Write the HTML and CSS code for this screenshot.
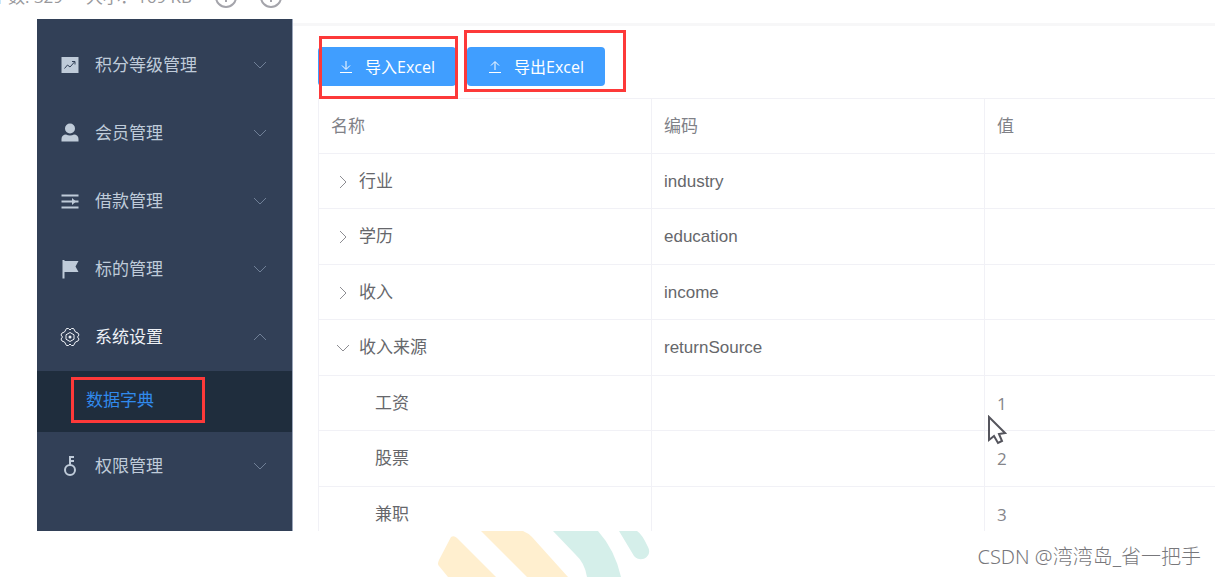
FILE: index.html
```html
<!DOCTYPE html>
<html lang="zh-CN">
<head>
<meta charset="utf-8">
<meta name="viewport" content="width=device-width, initial-scale=1">
<title>数据字典</title>
<link rel="stylesheet" href="styles.css">
</head>
<body>
<div class="page">
  <div class="info-strip">
    <div class="info-row">
      <span>个数: 329</span>
      <span>大小：169 KB</span>
      <svg class="info-icon" viewBox="0 0 22 22"><circle cx="11" cy="11" r="10"/><path d="M11 6v10M7 10l4-4 4 4"/></svg>
      <svg class="info-icon" viewBox="0 0 22 22"><circle cx="11" cy="11" r="10"/><path d="M11 6v10M7 10l4-4 4 4"/></svg>
    </div>
  </div>

  <div class="app">
    <nav class="sidebar">
      <a class="menu-item" href="#">
        <svg class="menu-icon" viewBox="0 0 20 20"><path class="solid" d="M1.500 2h17v16h-17z"/><path class="cut" d="M4.500 13.500l3-3.500 2.500 2 4.500-5M12 6.500h3v3"/></svg>
        <span class="menu-label">积分等级管理</span>
        <svg class="arrow" viewBox="0 0 14 14"><path d="M1 4l6 6 6-6"/></svg>
      </a>
      <a class="menu-item" href="#">
        <svg class="menu-icon" viewBox="0 0 20 20"><circle class="solid" cx="10" cy="5.500" r="5"/><path class="solid" d="M1.500 18.500v-2.500c0-3 2-4.500 4.500-4.500 2.500 1.200 5.500 1.200 8 0 2.500 0 4.500 1.500 4.500 4.500v2.500z"/></svg>
        <span class="menu-label">会员管理</span>
        <svg class="arrow" viewBox="0 0 14 14"><path d="M1 4l6 6 6-6"/></svg>
      </a>
      <a class="menu-item" href="#">
        <svg class="menu-icon" viewBox="0 0 20 20"><path class="line" d="M1.500 4.500h17M1.500 10.500h17M1.500 16.500h17"/><path class="solid" d="M12 7l4 3.500-4 3.500z"/></svg>
        <span class="menu-label">借款管理</span>
        <svg class="arrow" viewBox="0 0 14 14"><path d="M1 4l6 6 6-6"/></svg>
      </a>
      <a class="menu-item" href="#">
        <svg class="menu-icon" viewBox="0 0 20 20"><path class="solid" d="M2.500 1h2v1h14l-3 5.500 3 5.500h-14v6.500h-2z"/></svg>
        <span class="menu-label">标的管理</span>
        <svg class="arrow" viewBox="0 0 14 14"><path d="M1 4l6 6 6-6"/></svg>
      </a>
      <a class="menu-item open" href="#">
        <svg class="menu-icon" viewBox="0 0 20 20"><path class="line" d="M6.500 1.500h2l1.500 1.500 1.500-1.500h2l2 3.500 2.500 1 1 2-1.500 2 1.500 2-1 2-2.500 1-2 3.500h-2l-1.500-1.500-1.500 1.500h-2l-2-3.500-2.500-1-1-2 1.500-2-1.500-2 1-2 2.500-1z"/><path class="line" d="M10 5.500l4 2.300v4.400l-4 2.300-4-2.300v-4.400z"/><circle class="solid" cx="10" cy="10" r="1.500"/></svg>
        <span class="menu-label">系统设置</span>
        <svg class="arrow" viewBox="0 0 14 14"><path d="M1 10l6-6 6 6"/></svg>
      </a>
      <a class="submenu-item" href="#">数据字典<span class="mark mark-menu"></span></a>
      <a class="menu-item" href="#">
        <svg class="menu-icon" viewBox="0 0 20 20"><circle class="line" cx="10" cy="14" r="5"/><path class="line" d="M10 9v-8h4M10 5h4"/></svg>
        <span class="menu-label">权限管理</span>
        <svg class="arrow" viewBox="0 0 14 14"><path d="M1 4l6 6 6-6"/></svg>
      </a>
    </nav>

    <main class="content">
      <div class="toolbar">
        <div class="action">
          <button class="btn" type="button"><svg class="btn-icon" viewBox="0 0 14 14"><path d="M7 1v8M3 5.500l4 4 4-4M1 12.500h12"/></svg>导入Excel</button>
          <span class="mark mark-import"></span>
        </div>
        <div class="action">
          <button class="btn" type="button"><svg class="btn-icon" viewBox="0 0 14 14"><path d="M7 10v-8M3 5.500l4-4 4 4M1 12.500h12"/></svg>导出Excel</button>
          <span class="mark mark-export"></span>
        </div>
      </div>
      <table class="dict">
        <thead>
          <tr><th class="col-name">名称</th><th class="col-code">编码</th><th>值</th></tr>
        </thead>
        <tbody>
          <tr><td><span class="node"><svg class="expand" viewBox="0 0 14 14"><path d="M4 1l6 6-6 6"/></svg>行业</span></td><td>industry</td><td></td></tr>
          <tr><td><span class="node"><svg class="expand" viewBox="0 0 14 14"><path d="M4 1l6 6-6 6"/></svg>学历</span></td><td>education</td><td></td></tr>
          <tr><td><span class="node"><svg class="expand" viewBox="0 0 14 14"><path d="M4 1l6 6-6 6"/></svg>收入</span></td><td>income</td><td></td></tr>
          <tr><td><span class="node"><svg class="expand" viewBox="0 0 14 14"><path d="M1 4l6 6 6-6"/></svg>收入来源</span></td><td>returnSource</td><td></td></tr>
          <tr><td class="child">工资</td><td></td><td>1</td></tr>
          <tr><td class="child">股票</td><td></td><td>2</td></tr>
          <tr><td class="child">兼职</td><td></td><td>3</td></tr>
        </tbody>
      </table>
    </main>
  </div>

  <footer class="footer">
    <svg class="stripes" viewBox="0 0 220 46">
      <path class="sand" d="M21 6q3-2 6 1l39 39H18L9 35q-2-2 0-6z"/>
      <path class="sand" d="M51 0h42q5 2 9 6l36 40H97z"/>
      <path class="mint" d="M123 0h45q17 19 23 46h-34q-2-14-12-23z"/>
      <path class="mint" d="M189 0h18q5 3 11 16c5 9-7 17-14 9z"/>
    </svg>
    <span class="watermark">CSDN @湾湾岛_省一把手</span>
  </footer>

  <svg class="cursor" viewBox="0 0 20 30"><path d="M2 2v23l5-4 4 7 4-2-3-7 6-1z"/></svg>
</div>
</body>
</html>
```

FILE: styles.css
```css
* { box-sizing: border-box; }

body {
  margin: 0;
  background: #fff;
  color: #66676b;
  font: 17px/24px "Liberation Sans", "Noto Sans CJK SC", sans-serif;
}

.page {
  position: relative;
  display: flex;
  flex-direction: column;
  height: 100vh;
  overflow: hidden;
}

.info-strip {
  flex: none;
  height: 19px;
  overflow: hidden;
}
.info-row {
  display: flex;
  align-items: center;
  gap: 23px;
  margin: -15px 0 0 -9px;
  color: #98989c;
  font-family: "Open Sans", "Noto Sans CJK SC", sans-serif;
}
.info-icon {
  width: 22px;
  height: 22px;
  fill: none;
  stroke: #a4a4ab;
  stroke-width: 2;
}

.app {
  display: flex;
  flex: 1;
  min-height: 0;
  margin-left: 37px;
  overflow: hidden;
}

.sidebar {
  flex: none;
  width: 256px;
  padding-top: 12px;
  background: #324057;
  border-right: 1px solid #9ba6ba;
}
.menu-item {
  display: flex;
  align-items: center;
  height: 68px;
  padding: 0 25px 0 23px;
  color: #bfcbd9;
  text-decoration: none;
}
.open { color: #eef1f6; }
.menu-icon { width: 20px; height: 20px; margin-right: 15px; }
.solid { fill: currentColor; }
.line { fill: none; stroke: currentColor; stroke-width: 2; }
.open .line { stroke-width: 1; }
.cut { fill: none; stroke: #324057; stroke-width: 1; }
.menu-label { flex: 1; padding-top: 1px; }
.arrow, .expand {
  width: 14px;
  height: 14px;
  fill: none;
  stroke: #708097;
  stroke-width: 1;
}
.submenu-item {
  position: relative;
  display: flex;
  align-items: center;
  height: 61px;
  padding: 0 0 2px 49px;
  background: #1f2d3d;
  color: #318aec;
  text-decoration: none;
}

.mark {
  position: absolute;
  border: 3px solid #fd3939;
  pointer-events: none;
}
.mark-menu { top: 6px; left: 34px; width: 134px; height: 46px; }
.mark-import { top: -11px; left: 1px; width: 139px; height: 63px; }
.mark-export { top: -17px; left: -3px; width: 162px; height: 62px; }

.content {
  flex: 1;
  min-width: 0;
  padding: 4px 0 0 25px;
}
.content::before {
  content: "";
  display: block;
  height: 3px;
  margin-left: -25px;
  background: #f7f7f8;
}
.toolbar { display: flex; gap: 11px; padding: 21px 0 12px; }
.action { position: relative; }
.btn {
  display: flex;
  align-items: center;
  justify-content: center;
  gap: 12px;
  width: 138px;
  height: 39px;
  padding: 0;
  border: 0;
  border-radius: 4px;
  background: #409eff;
  color: #fff;
  font: 16px/24px "Open Sans", "Noto Sans CJK SC", sans-serif;
}
.btn-icon {
  width: 14px;
  height: 14px;
  fill: none;
  stroke: currentColor;
  stroke-width: 1;
}

.dict {
  width: 100%;
  table-layout: fixed;
  border-spacing: 0;
  border-top: 1px solid #f1f1f6;
  border-left: 1px solid #f1f1f6;
}
.dict th, .dict td {
  height: 55px;
  padding: 1px 12px 0;
  border-right: 1px solid #f1f1f6;
  border-bottom: 1px solid #f1f1f6;
  text-align: left;
  font-weight: 400;
}
.dict tr > :last-child { border-right: 0; }
.dict tbody tr:nth-child(even) td { height: 56px; }
.dict th { color: #808187; }
.dict .col-name, .dict .col-code { width: 333px; }
.dict td:last-child { color: #85858a; font-family: "Open Sans", sans-serif; }
.node { display: flex; align-items: center; gap: 9px; padding-left: 5px; }
.expand { stroke: #8d8d92; }
.dict .child { padding-left: 56px; }

.footer {
  display: flex;
  flex: none;
  justify-content: space-between;
  align-items: center;
  height: 46px;
  padding: 0 14px 0 430px;
}
.stripes { flex: none; width: 220px; height: 46px; }
.sand { fill: #ffefcf; }
.mint { fill: #d5efea; }
.watermark {
  padding-top: 6px;
  color: #77777b;
  font: 300 20px/28px "Noto Sans", "Noto Sans CJK SC", sans-serif;
  white-space: nowrap;
}

.cursor {
  position: absolute;
  top: 415px;
  left: 987px;
  width: 20px;
  height: 30px;
  fill: #fff;
  stroke: #55555d;
  stroke-width: 2;
}
```
